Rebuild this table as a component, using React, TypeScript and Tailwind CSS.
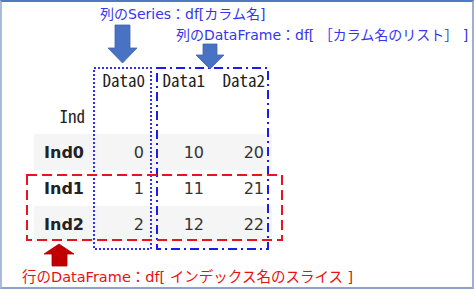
const rows = [
  { ind: "Ind0", vals: ["0", "10", "20"], shade: true },
  { ind: "Ind1", vals: ["1", "11", "21"], shade: false },
  { ind: "Ind2", vals: ["2", "12", "22"], shade: true },
];

export default function App() {
  return (
    <div className="relative w-[474px] h-[294px] bg-white overflow-hidden">
      {/* 外枠 + テーブル */}
      <div className="h-[289px] border-2 border-t-[#5079c4] border-l-[#a9bbdc] border-r-[#9bb0d4] border-b-[#8ea3c8] pl-[32px] pt-[60px]">
        <div className="flex flex-col w-[238px]">
          {/* ヘッダー1 */}
          <div className="flex h-[36px] items-center font-['Noto_Sans_Mono_CJK_JP','DejaVu_Sans_Mono',monospace] text-[17px] text-[#222]">
            <div className="w-[58px]" />
            {["Data0", "Data1", "Data2"].map((h) => (
              <div key={h} className="w-[60px] text-right pr-[7px]">{h}</div>
            ))}
          </div>
          {/* ヘッダー2 */}
          <div className="flex h-[36px] items-center font-['Noto_Sans_Mono_CJK_JP','DejaVu_Sans_Mono',monospace] text-[17px] text-[#222]">
            <div className="w-[58px] text-right pr-[7px]">Ind</div>
          </div>
          {/* データ行 */}
          {rows.map((r) => (
            <div
              key={r.ind}
              className={`flex h-[36px] items-center pt-[2px] font-['DejaVu_Sans',sans-serif] text-[16px] ${r.shade ? "bg-[#f5f5f5]" : "bg-white"}`}
            >
              <div className="w-[58px] text-right pr-[8px] font-bold text-[#222]">{r.ind}</div>
              {r.vals.map((v, i) => (
                <div key={i} className="w-[60px] text-right pr-[8px] text-[#333]">{v}</div>
              ))}
            </div>
          ))}
        </div>
      </div>

      {/* 注釈の枠と矢印 */}
      <svg className="absolute left-0 top-0" width="474" height="294" viewBox="0 0 474 294">
        <rect x="94" y="68" width="57" height="181" fill="none" stroke="#2f2ff5" strokeWidth="2" strokeDasharray="2 2" />
        <rect x="157" y="68" width="111" height="181" fill="none" stroke="#1c1cf0" strokeWidth="2" strokeDasharray="9 4 2 4" />
        <rect x="27" y="175" width="255" height="65" fill="none" stroke="#e8141e" strokeWidth="2" strokeDasharray="10 5" />
        <polygon points="115,25 130,25 130,48 137,48 122.5,63 108,48 115,48" fill="#4a72c2" stroke="#3f66b0" strokeWidth="0.8" />
        <polygon points="203,44 217,44 217,55 224,55 210,69 196,55 203,55" fill="#4a72c2" stroke="#3f66b0" strokeWidth="0.8" />
        <polygon points="59,244 74,254 67,254 67,266 52,266 52,254 44,254" fill="#c00000" stroke="#a80000" strokeWidth="0.8" />
      </svg>

      {/* 注釈テキスト */}
      <div className="absolute left-[100px] top-[5px] leading-[18px] text-[14px] text-[#3535f0] whitespace-nowrap font-['DejaVu_Sans','Noto_Sans_CJK_JP',sans-serif]">
        列のSeries：df[カラム名]
      </div>
      <div className="absolute left-[176px] top-[26px] leading-[18px] text-[14px] text-[#3535f0] whitespace-nowrap font-['DejaVu_Sans','Noto_Sans_CJK_JP',sans-serif]">
        列のDataFrame：df[ ［カラム名のリスト］ ]
      </div>
      <div className="absolute left-[22px] top-[268px] leading-[18px] text-[14.5px] text-[#e81010] whitespace-nowrap font-['DejaVu_Sans','Noto_Sans_CJK_JP',sans-serif]">
        行のDataFrame：df[ インデックス名のスライス ]
      </div>
    </div>
  );
}
